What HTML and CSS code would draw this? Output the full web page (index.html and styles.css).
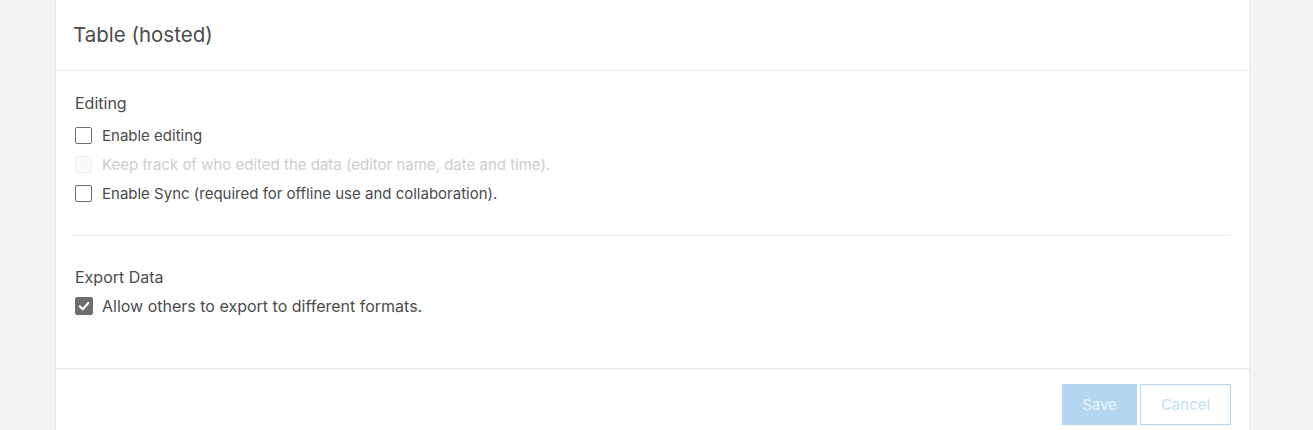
FILE: index.html
```html
<!DOCTYPE html>
<html>
<head>
<meta charset="utf-8">
<link rel="stylesheet" href="styles.css">
</head>
<body>
<div class="page">
  <div class="panel">
    <div class="panel-header">
      <h2 class="title">Table (hosted)</h2>
    </div>
    <div class="panel-body">
      <section class="group group-editing">
        <h3 class="group-title">Editing</h3>
        <label class="option"><span class="box"></span><span class="text">Enable editing</span></label>
        <label class="option disabled"><span class="box"></span><span class="text">Keep track of who edited the data (editor name, date and time).</span></label>
        <label class="option"><span class="box"></span><span class="text">Enable Sync (required for offline use and collaboration).</span></label>
      </section>
      <section class="group group-export">
        <h3 class="group-title">Export Data</h3>
        <label class="option option-export"><span class="box checked"><svg viewBox="0 0 18 18" width="18" height="18"><path d="M4.2 9.3 L7.6 12.6 L13.8 5.6" fill="none" stroke="#fff" stroke-width="2.4" stroke-linecap="round" stroke-linejoin="round"/></svg></span><span class="text">Allow others to export to different formats.</span></label>
      </section>
    </div>
    <div class="panel-footer">
      <button class="btn btn-primary">Save</button>
      <button class="btn btn-secondary">Cancel</button>
    </div>
  </div>
</div>
</body>
</html>
```
FILE: styles.css
```css
html, body {
  margin: 0;
  padding: 0;
  background: #f3f3f3;
  height: 100%;
  overflow: hidden;
}
body {
  font-family: "Inter", "Open Sans", sans-serif;
  color: #4c4c4c;
}
.page {
  padding-left: 55px;
  width: 1195px;
}
.panel {
  background: #fff;
  border-left: 1px solid #ebebeb;
  border-right: 1px solid #ebebeb;
  height: 430px;
  box-sizing: border-box;
}
.panel-header {
  height: 71px;
  border-bottom: 1px solid #ebebeb;
  display: flex;
  align-items: center;
  padding-left: 17px;
  box-sizing: border-box;
}
.title {
  margin: 0;
  font-weight: 400;
  font-size: 20.5px;
  color: #4c4c4c;
  padding-bottom: 0;
  line-height: 24px;
}
.panel-body {
  padding: 0 18px 0 16px;
  height: 297px;
}
.group-editing {
  padding-top: 21px;
  height: 143px;
  border-bottom: 1px solid #ebebeb;
}
.group-editing .group-title {
  margin-bottom: 7px;
}
.group-export {
  padding-top: 30px;
}
.group-export .group-title {
  margin-bottom: 3px;
}
.group-title {
  margin: 0 0 5px 3px;
  font-size: 16px;
  font-weight: 400;
  color: #4c4c4c;
  height: 22px;
  line-height: 22px;
}
.option {
  display: flex;
  align-items: center;
  height: 29px;
  padding-left: 3px;
  font-size: 15px;
  color: #4c4c4c;
}
.option-export {
  font-size: 16px;
}
.box {
  width: 17px;
  height: 17px;
  box-sizing: border-box;
  border: 1px solid #6e6e6e;
  border-radius: 2px;
  margin-right: 10px;
  flex: none;
  display: flex;
  align-items: center;
  justify-content: center;
}
.box.checked {
  width: 18px;
  height: 18px;
  background: #6e6e6e;
  border-color: #6e6e6e;
  margin-right: 9px;
}
.box.checked svg {
  display: block;
}
.option.disabled {
  color: #cdcdcd;
}
.option.disabled .box {
  border-color: #eeeeee;
  background: #fafafa;
}
.panel-footer {
  border-top: 2px solid #ededed;
  display: flex;
  justify-content: flex-end;
  gap: 3px;
  padding: 14px 18px 0 0;
}
.btn {
  height: 41px;
  font-family: "Inter", "Open Sans", sans-serif;
  font-size: 15px;
  box-sizing: border-box;
  cursor: default;
}
.btn-primary {
  width: 75px;
  background: #b3d7ee;
  border: 1px solid #b3d7ee;
  color: #eaf4fb;
}
.btn-secondary {
  width: 91px;
  background: #fff;
  border: 1px solid #b3d7ee;
  color: #c4e0f2;
}
```
